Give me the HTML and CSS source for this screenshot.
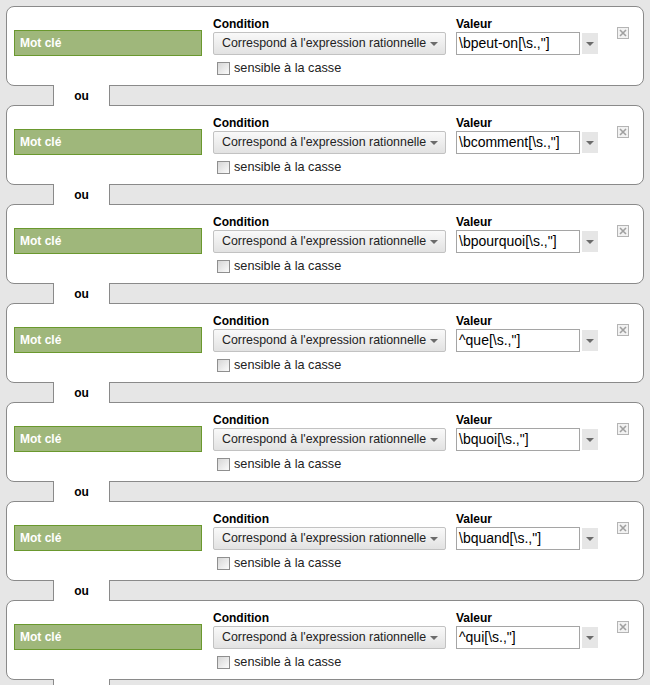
FILE: index.html
```html
<!DOCTYPE html>
<html lang="fr">
<head>
    <meta charset="UTF-8">
    <title>Filtres mot clé</title>
    <link rel="stylesheet" href="styles.css">
</head>
<body>
    <div class="rules" id="rules"></div>
    <script>
        const values = [
            '\\bpeut-on[\\s.,"]',
            '\\bcomment[\\s.,"]',
            '\\bpourquoi[\\s.,"]',
            '^que[\\s.,"]',
            '\\bquoi[\\s.,"]',
            '\\bquand[\\s.,"]',
            '^qui[\\s.,"]'
        ];

        const closeIcon = '<svg width="12" height="12" viewBox="0 0 12 12">' +
            '<rect x="0.5" y="0.5" width="11" height="11" fill="#f2f2f2" stroke="#b4b4b4"/>' +
            '<path d="M3 3 L9 9 M9 3 L3 9" stroke="#a0a0a0" stroke-width="1.6"/></svg>';

        const list = document.getElementById('rules');
        let html = '';
        values.forEach(function (value) {
            html += '<div class="rule">' +
                '<div class="name-col"><div class="field-name">Mot clé</div></div>' +
                '<div class="cond-col">' +
                    '<div class="label">Condition</div>' +
                    '<div class="select">Correspond à l\'expression rationnelle<span class="arrow"></span></div>' +
                    '<div class="case"><span class="check"></span>sensible à la casse</div>' +
                '</div>' +
                '<div class="value-col">' +
                    '<div class="label">Valeur</div>' +
                    '<div class="value-row">' +
                        '<div class="value-input"></div>' +
                        '<div class="value-btn"><span class="arrow"></span></div>' +
                    '</div>' +
                '</div>' +
                '<div class="remove">' + closeIcon + '</div>' +
            '</div>' +
            '<div class="or">ou</div>';
        });
        list.innerHTML = html;

        // values as text, so the backslashes stay as typed
        const inputs = list.querySelectorAll('.value-input');
        values.forEach(function (value, i) {
            inputs[i].textContent = value;
        });
    </script>
</body>
</html>
```

FILE: styles.css
```css
body {
    margin: 0;
    background-color: #e6e6e6;
    font-family: "Liberation Sans", Arial, sans-serif;
    font-size: 12px;
    color: #000;
}
.rules {
    padding: 6px 6px 0 6px;
}
.rule {
    display: flex;
    align-items: flex-start;
    height: 68px;
    padding: 10px 0 0 7px;
    background-color: #fff;
    border: 1px solid #8a8a8a;
    border-radius: 8px;
}
.name-col {
    margin-top: 13px;
}
.field-name {
    width: 181px;
    height: 24px;
    line-height: 24px;
    padding-left: 5px;
    background-color: #9fb77b;
    border: 1px solid #6a982e;
    color: #fff;
    font-weight: bold;
}
.cond-col {
    width: 232px;
    margin-left: 11px;
}
.label {
    font-weight: bold;
    line-height: 14px;
    margin-bottom: 1px;
}
.select {
    position: relative;
    width: 223px;
    height: 21px;
    line-height: 21px;
    padding-left: 8px;
    border: 1px solid #c2c2c2;
    border-radius: 2px;
    background: linear-gradient(#f9f9f9, #e2e2e2);
    font-size: 12.4px;
    color: #222;
}
.arrow {
    position: absolute;
    top: 9px;
    right: 7px;
    border-left: 4px solid transparent;
    border-right: 4px solid transparent;
    border-top: 4px solid #6b6b6b;
}
.case {
    display: flex;
    align-items: center;
    margin-top: 7px;
    margin-left: 4px;
    line-height: 13px;
    font-size: 12.7px;
    color: #222;
}
.check {
    width: 11px;
    height: 11px;
    margin-right: 4px;
    border: 1px solid #8f8f8f;
    background: linear-gradient(135deg, #d6d6d6, #fbfbfb);
}
.value-col {
    margin-left: 11px;
}
.value-row {
    display: flex;
    align-items: flex-start;
}
.value-input {
    width: 120px;
    height: 21px;
    line-height: 21px;
    padding-left: 2px;
    border: 1px solid #a5a5a5;
    font-size: 14px;
    color: #000;
    white-space: nowrap;
    overflow: hidden;
}
.value-btn {
    position: relative;
    width: 16px;
    height: 21px;
    margin: 1px 0 0 2px;
    background-color: #e6e6e6;
}
.value-btn .arrow {
    top: 9px;
    right: 4px;
}
.remove {
    margin: 10px 0 0 19px;
    height: 12px;
}
.remove svg {
    display: block;
}
.or {
    position: relative;
    width: 55px;
    height: 21px;
    margin: -1px 0 -1px 47px;
    line-height: 22px;
    text-align: center;
    background-color: #fff;
    border-left: 1px solid #8a8a8a;
    border-right: 1px solid #8a8a8a;
    font-weight: bold;
}
```
